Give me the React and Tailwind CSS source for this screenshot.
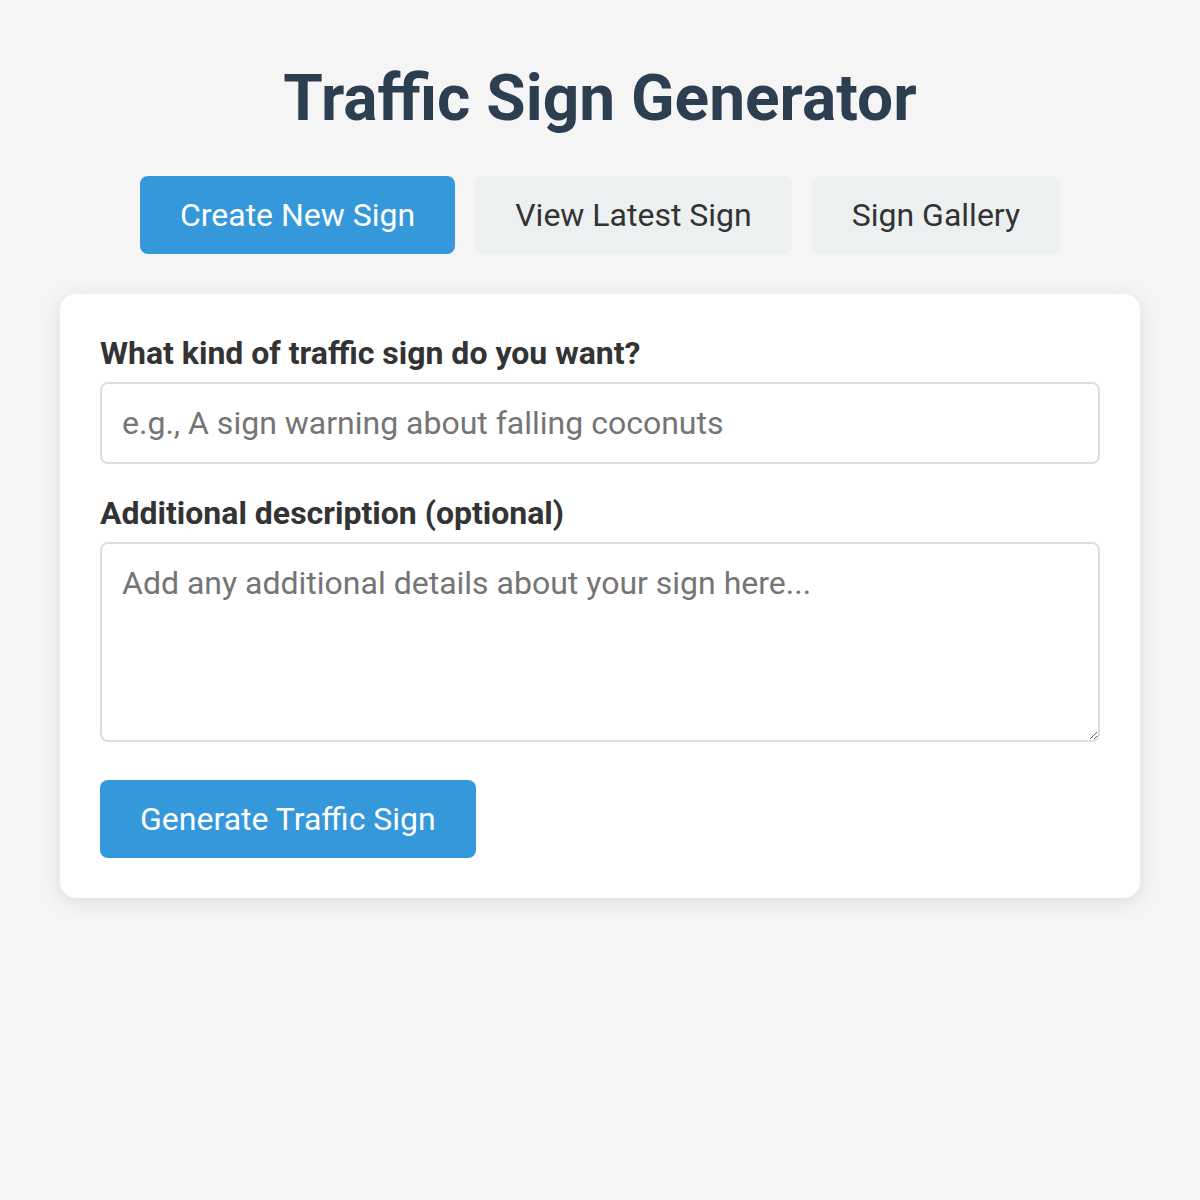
import React, { useState } from 'react';

const tabs = ['Create New Sign', 'View Latest Sign', 'Sign Gallery'];

export default function App() {
  const [active, setActive] = useState(0);

  return (
    <div className="min-h-screen bg-[#f5f5f5] font-['Roboto',sans-serif] text-[#333]">
      <div className="mx-auto w-[1080px] pt-[61px] pb-10">
        <h1 className="text-center text-[64px] font-bold leading-[75px] text-[#2c3e50]">
          Traffic Sign Generator
        </h1>

        {/* Tabs */}
        <div className="mt-10 flex justify-center gap-5">
          {tabs.map((t, i) => (
            <button
              key={t}
              onClick={() => setActive(i)}
              className={
                i === active
                  ? 'rounded-lg bg-[#3498db] px-10 py-5 text-[32px] leading-[38px] text-white'
                  : 'rounded-lg bg-[#ecf0f1] px-10 py-5 text-[32px] leading-[38px] text-[#333]'
              }
            >
              {t}
            </button>
          ))}
        </div>

        {/* Form card */}
        <div className="mt-10 rounded-2xl bg-white p-10 shadow-[0_4px_20px_rgba(0,0,0,0.1)]">
          <div className="mb-[30px]">
            <label className="mb-[10px] block text-[32px] font-bold leading-[38px] text-[#333]">
              What kind of traffic sign do you want?
            </label>
            <input
              type="text"
              placeholder="e.g., A sign warning about falling coconuts"
              className="block w-full rounded-lg border-2 border-[#ddd] bg-white px-5 py-5 text-[32px] leading-[38px] text-[#333] outline-none placeholder:text-[#757575]"
            />
          </div>

          <div className="mb-[38px]">
            <label className="mb-[10px] block text-[32px] font-bold leading-[38px] text-[#333]">
              Additional description (optional)
            </label>
            <textarea
              placeholder="Add any additional details about your sign here..."
              className="block h-[200px] w-full rounded-lg border-2 border-[#ddd] bg-white px-5 py-5 text-[32px] leading-[38px] text-[#333] outline-none placeholder:text-[#757575]"
            />
          </div>

          <button className="rounded-lg bg-[#3498db] px-10 py-5 text-[32px] leading-[38px] text-white">
            Generate Traffic Sign
          </button>
        </div>
      </div>
    </div>
  );
}
